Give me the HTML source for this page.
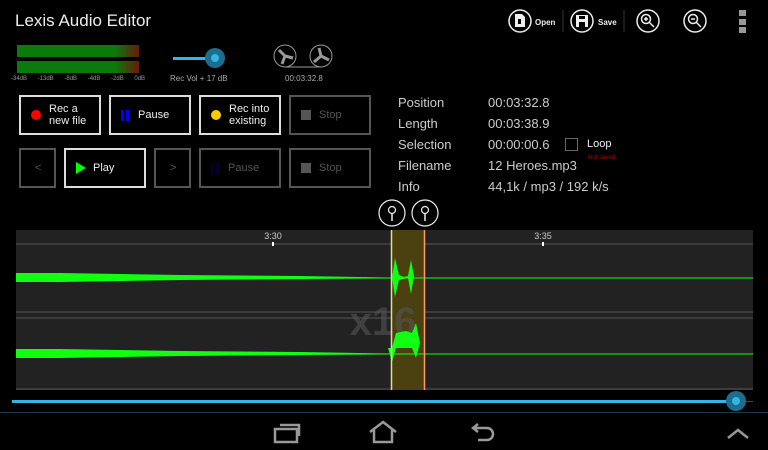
<!DOCTYPE html><html><head><style>
body{margin:0;width:768px;height:450px;background:#000;overflow:hidden;font-family:"Liberation Sans",sans-serif;color:#ddd;position:relative}
.a{position:absolute}
.b{position:absolute;border:2px solid #ddd;box-sizing:border-box;height:40px;font-size:11px;color:#eee}
.b.d{border-color:#555;color:#555}
.lbl{position:absolute;font-size:13px;color:#ccc}
</style></head><body>
<div class="a" style="left:15px;top:11px;font-size:17px;color:#eee">Lexis Audio Editor</div>
<svg class="a" style="left:0;top:0" width="768" height="40">
<g fill="none" stroke="#eee" stroke-width="1.5">
<circle cx="520" cy="21" r="11"/><circle cx="582" cy="21" r="11"/><circle cx="648" cy="21" r="11"/><circle cx="695" cy="21" r="11"/>
<circle cx="646" cy="19" r="4.5"/><line x1="649" y1="22" x2="654" y2="27"/><line x1="644" y1="19" x2="648" y2="19"/><line x1="646" y1="17" x2="646" y2="21"/>
<circle cx="693" cy="19" r="4.5"/><line x1="696" y1="22" x2="701" y2="27"/><line x1="691" y1="19" x2="695" y2="19"/>
</g>
<path d="M515 14h7l3 3v10h-10z" fill="#eee"/><path d="M518 19h3v5h-3z" fill="#000"/>
<rect x="576" y="15" width="12" height="12" fill="#eee"/><rect x="579" y="16" width="6" height="3" fill="#000"/><rect x="579" y="22" width="6" height="5" fill="#000"/>
<text x="535" y="25" font-size="8" font-weight="bold" fill="#eee" font-family="Liberation Sans">Open</text>
<text x="598" y="25" font-size="8" font-weight="bold" fill="#eee" font-family="Liberation Sans">Save</text>
<line x1="563" y1="10" x2="563" y2="32" stroke="#333"/><line x1="624" y1="10" x2="624" y2="32" stroke="#333"/>
<rect x="739" y="10" width="7" height="6" fill="#999"/><rect x="739" y="19" width="7" height="6" fill="#999"/><rect x="739" y="27" width="7" height="6" fill="#999"/>
</svg>
<div class="a" style="left:17px;top:45px;width:122px;height:12px;background:linear-gradient(90deg,#0a7a0a 0%,#0a7a0a 80%,#6a1a0a 100%)"></div>
<div class="a" style="left:17px;top:61px;width:122px;height:12px;background:linear-gradient(90deg,#0a7a0a 0%,#0a7a0a 80%,#6a1a0a 100%)"></div>
<div class="a" style="left:11px;top:76px;font-size:6px;color:#999;word-spacing:9px">-34dB -13dB -8dB -4dB -2dB 0dB</div>
<div class="a" style="left:173px;top:57px;width:42px;height:3px;background:#33b5e5"></div>
<div class="a" style="left:205px;top:48px;width:20px;height:20px;border-radius:50%;background:#1c6e8c"></div>
<div class="a" style="left:211px;top:54px;width:8px;height:8px;border-radius:50%;background:#33b5e5"></div>
<div class="a" style="left:170px;top:74px;font-size:8px;color:#aaa">Rec Vol + 17 dB</div>
<svg class="a" style="left:270px;top:42px" width="70" height="30" fill="none" stroke="#999" stroke-width="1">
<circle cx="15" cy="14" r="11"/><circle cx="51" cy="14" r="11"/>
<path d="M15 14l-6-6M15 14l8 2M15 14l-3 8M51 14l-2-8M51 14l8 4M51 14l-7 6" stroke-width="3"/>
<path d="M15 25h36"/></svg>
<div class="a" style="left:285px;top:74px;font-size:8px;color:#aaa">00:03:32.8</div>

<div class="b" style="left:19px;top:95px;width:82px"><span class="a" style="left:10px;top:13px;width:10px;height:10px;border-radius:50%;background:#f00"></span><span class="a" style="left:28px;top:6px;line-height:12px">Rec a<br>new file</span></div>
<div class="b" style="left:109px;top:95px;width:82px"><span class="a" style="left:10px;top:13px;width:3px;height:11px;background:#00f;box-shadow:5px 0 #00f"></span><span class="a" style="left:27px;top:12px">Pause</span></div>
<div class="b" style="left:199px;top:95px;width:82px"><span class="a" style="left:10px;top:13px;width:10px;height:10px;border-radius:50%;background:#fc0"></span><span class="a" style="left:28px;top:6px;line-height:12px">Rec into<br>existing</span></div>
<div class="b d" style="left:289px;top:95px;width:82px"><span class="a" style="left:10px;top:13px;width:10px;height:10px;background:#555"></span><span class="a" style="left:28px;top:12px">Stop</span></div>
<div class="b d" style="left:19px;top:148px;width:37px"><span class="a" style="left:14px;top:12px">&lt;</span></div>
<div class="b" style="left:64px;top:148px;width:82px"><span class="a" style="left:10px;top:12px;border-left:10px solid #0f0;border-top:6px solid transparent;border-bottom:6px solid transparent"></span><span class="a" style="left:27px;top:12px">Play</span></div>
<div class="b d" style="left:154px;top:148px;width:37px"><span class="a" style="left:14px;top:12px">&gt;</span></div>
<div class="b d" style="left:199px;top:148px;width:82px"><span class="a" style="left:10px;top:13px;width:3px;height:11px;background:#003;box-shadow:5px 0 #003"></span><span class="a" style="left:27px;top:12px">Pause</span></div>
<div class="b d" style="left:289px;top:148px;width:82px"><span class="a" style="left:10px;top:13px;width:10px;height:10px;background:#555"></span><span class="a" style="left:28px;top:12px">Stop</span></div>

<div class="lbl" style="left:398px;top:95px">Position</div><div class="lbl" style="left:488px;top:95px">00:03:32.8</div>
<div class="lbl" style="left:398px;top:116px">Length</div><div class="lbl" style="left:488px;top:116px">00:03:38.9</div>
<div class="lbl" style="left:398px;top:137px">Selection</div><div class="lbl" style="left:488px;top:137px">00:00:00.6</div>
<div class="a" style="left:565px;top:138px;width:11px;height:11px;border:1px solid #666"></div>
<div class="a" style="left:587px;top:138px;font-size:11px;color:#eee">Loop</div>
<div class="a" style="left:588px;top:155px;font-size:6px;color:#a00">Not saved</div>
<div class="lbl" style="left:398px;top:158px">Filename</div><div class="lbl" style="left:488px;top:158px">12 Heroes.mp3</div>
<div class="lbl" style="left:398px;top:179px">Info</div><div class="lbl" style="left:488px;top:179px">44,1k / mp3 / 192 k/s</div>

<svg class="a" style="left:0;top:198px" width="768" height="252">
<rect x="16" y="32" width="737" height="160" fill="#222"/>
<line x1="16" y1="46" x2="753" y2="46" stroke="#555"/>
<line x1="16" y1="114" x2="753" y2="114" stroke="#555"/><line x1="16" y1="120" x2="753" y2="120" stroke="#555"/>
<line x1="16" y1="191" x2="753" y2="191" stroke="#555"/>
<rect x="391" y="32" width="34" height="160" fill="#4a4010"/>
<text x="383" y="137" font-size="40" font-weight="bold" fill="#555" fill-opacity="0.6" text-anchor="middle" font-family="Liberation Sans">x16</text>
<text x="273" y="41" font-size="9" fill="#ccc" text-anchor="middle" font-family="Liberation Sans">3:30</text>
<text x="543" y="41" font-size="9" fill="#ccc" text-anchor="middle" font-family="Liberation Sans">3:35</text>
<rect x="272" y="44" width="2" height="4" fill="#fff"/><rect x="542" y="44" width="2" height="4" fill="#fff"/>
<path d="M16 75L60 75L120 76L180 77L300 78L391 79.5L753 79.5L753 80.5L391 80.5L300 81L180 82L120 83L60 84L16 84z" fill="#1f1"/>
<path d="M16 151L60 151L120 152L180 153L300 154L391 155.5L753 155.5L753 156.5L391 156.5L300 157L180 158L120 159L60 160L16 160z" fill="#1f1"/>
<path d="M392 80l3-20 4 17 5 2 4-1 3-16 3 16-3 18-3-16-4 1-5 1-4 17-3-19z" fill="#1f1"/>
<path d="M392 150l4-15 10-2 6 2 4-10 4 20 -4 15-4-10-6 0-10 0-4 14-4-14z" fill="#1f1"/>
<line x1="391.5" y1="32" x2="391.5" y2="192" stroke="#dd9" stroke-width="1.5"/>
<line x1="424.5" y1="32" x2="424.5" y2="192" stroke="#f96" stroke-width="1.5"/>
<g fill="#000" stroke="#eee" stroke-width="1.2"><circle cx="392" cy="15" r="13"/><circle cx="425" cy="15" r="13"/>
<circle cx="392" cy="12" r="3.5"/><circle cx="425" cy="12" r="3.5"/></g>
<path d="M392 16v7M425 16v7" stroke="#eee" stroke-width="1.5"/>
<rect x="12" y="202" width="725" height="3" fill="#33b5e5"/><rect x="737" y="203" width="16" height="1" fill="#444"/>
<circle cx="736" cy="203" r="10" fill="#1c6e8c"/><circle cx="736" cy="203" r="4" fill="#33b5e5"/>
<rect x="0" y="214" width="768" height="1" fill="#1c3a48"/>
<g fill="none" stroke="#999" stroke-width="2.5"><rect x="275" y="231" width="22" height="13"/><path d="M280 227h19v11"/>
<path d="M370 234l13-10 13 10M374 232v12h18v-12"/>
<path d="M478 226l-5 4 5 4M473 230h14a6 6 0 0 1 0 12h-9"/>
<path d="M728 240l10-8 10 8"/></g>
</svg>
</body></html>
